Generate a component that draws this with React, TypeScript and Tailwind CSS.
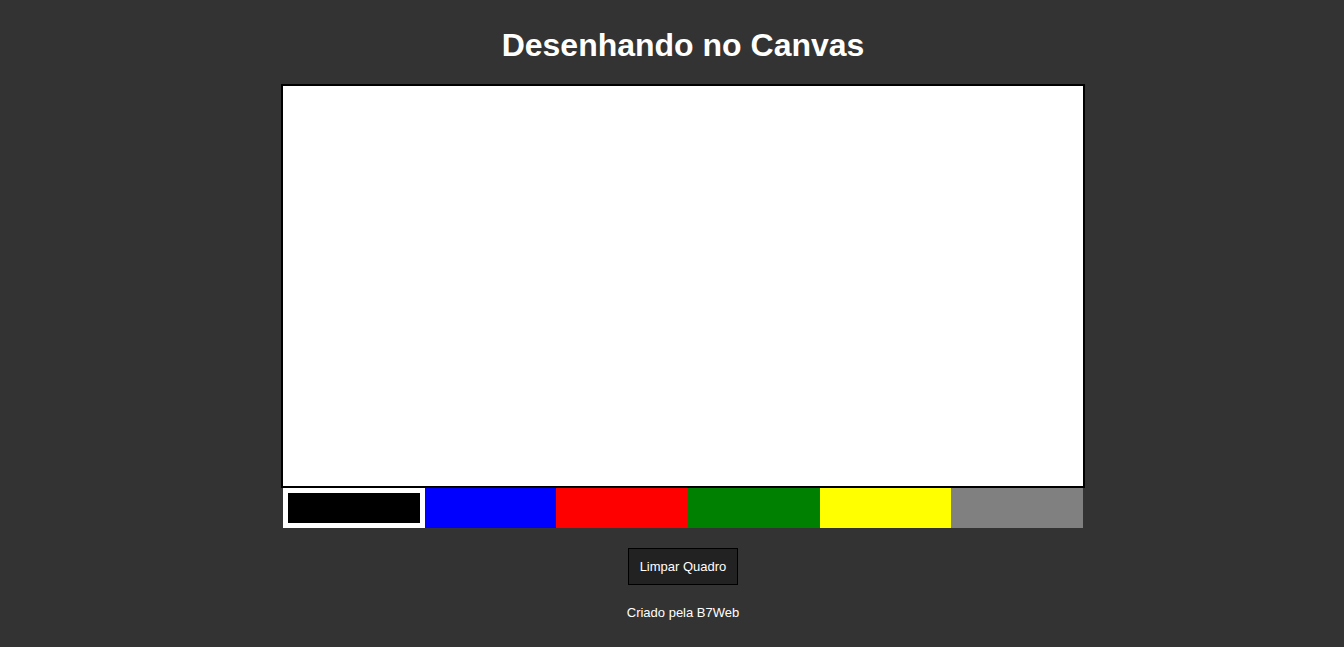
import React, { useState } from "react";

const colors = ["#000000", "#0000ff", "#ff0000", "#008000", "#ffff00", "#808080"];

export default function App() {
  const [active, setActive] = useState(0);
  return (
    <div
      className="min-h-screen bg-[#333333] text-white flex flex-col items-center pl-[22px] pt-[27px]"
      style={{ fontFamily: '"Liberation Sans", Arial, sans-serif' }}
    >
      <h1 className="text-[32px] font-bold leading-[36px] m-0">Desenhando no Canvas</h1>
      <div className="mt-[21px] w-[804px] h-[404px] border-2 border-black bg-white"></div>
      <div className="flex w-[800px] h-10">
        {colors.map((c, i) => (
          <div
            key={c}
            onClick={() => setActive(i)}
            className={
              i === active
                ? "flex-1 box-content border-[5px] border-white cursor-pointer"
                : "flex-1 box-content cursor-pointer"
            }
            style={{ backgroundColor: c }}
          ></div>
        ))}
      </div>
      <button className="mt-5 w-[110px] h-[37px] bg-[#222222] border border-black text-white text-[13px] leading-[15px]">
        Limpar Quadro
      </button>
      <div className="mt-[20px] text-[13px] leading-[15px]">Criado pela B7Web</div>
    </div>
  );
}
